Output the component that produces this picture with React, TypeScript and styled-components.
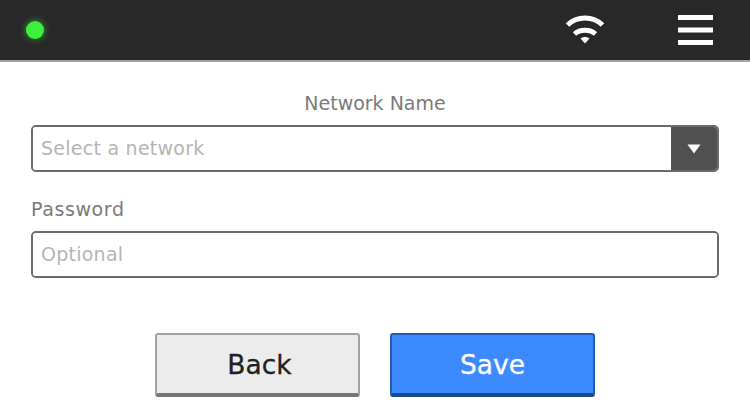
import styled, { createGlobalStyle } from 'styled-components';

const GlobalStyle = createGlobalStyle`
  html, body {
    margin: 0;
    padding: 0;
    background: #fff;
    font-family: "DejaVu Sans", sans-serif;
  }
`;

const Page = styled.div`
  width: 750px;
  height: 411px;
  overflow: hidden;
  display: flex;
  flex-direction: column;
`;

const Header = styled.header`
  height: 60px;
  flex: none;
  background: #282828;
  border-bottom: 2px solid #a0a0a0;
  display: flex;
  align-items: center;
  padding: 0 37px 0 26px;
`;

const StatusDot = styled.span`
  width: 18px;
  height: 18px;
  border-radius: 50%;
  background: #3cf03c;
  box-shadow: 0 0 6px 1px rgba(60, 240, 60, 0.45);
`;

const HeaderIcons = styled.div`
  margin-left: auto;
  display: flex;
  align-items: center;
  gap: 73px;
`;

const Form = styled.form`
  display: flex;
  flex-direction: column;
  padding: 30px 31px 0;
`;

const Label = styled.label<{ $center?: boolean; $tracking?: number }>`
  font-size: 19px;
  line-height: 23px;
  color: #7a7a7a;
  letter-spacing: ${(p) => p.$tracking ?? 0}px;
  text-align: ${(p) => (p.$center ? 'center' : 'left')};
  margin-bottom: 10px;
`;

const FieldBox = styled.div`
  height: 47px;
  box-sizing: border-box;
  border: 2px solid #6b6b6b;
  border-radius: 5px;
  display: flex;
  align-items: stretch;
  overflow: hidden;
  margin-bottom: 26px;
  background: #fff;
`;

const Input = styled.input`
  flex: 1;
  min-width: 0;
  border: 0;
  outline: 0;
  padding: 0 8px 2px;
  font: 19px "DejaVu Sans", sans-serif;
  letter-spacing: 0.25px;
  color: #333;

  &::placeholder {
    color: #b5b5b5;
    opacity: 1;
  }
`;

const Caret = styled.span`
  width: 46px;
  background: #505050;
  display: flex;
  align-items: center;
  justify-content: center;
`;

const Buttons = styled.div`
  display: flex;
  justify-content: center;
  gap: 30px;
  margin-top: 29px;
`;

const Button = styled.button<{ $primary?: boolean }>`
  width: 205px;
  height: 64px;
  box-sizing: border-box;
  border-radius: 3px;
  border: 2px solid ${(p) => (p.$primary ? '#1f5bb0' : '#a3a3a3')};
  border-bottom: 4px solid ${(p) => (p.$primary ? '#1c4a88' : '#777')};
  background: ${(p) => (p.$primary ? '#3d8aff' : '#ececec')};
  color: ${(p) => (p.$primary ? '#fff' : '#222')};
  font: 26.5px "DejaVu Sans", sans-serif;
  -webkit-text-stroke: 0.3px currentColor;
  padding: 0 0 0 ${(p) => (p.$primary ? 0 : 4)}px;
`;

export default function App() {
  return (
    <Page>
      <GlobalStyle />
      <Header>
        <StatusDot />
        <HeaderIcons>
          <svg width="40" height="30" viewBox="0 0 40 30" fill="none" stroke="#fff" strokeWidth="5">
            <path d="M2.5 10C12 .5 28 .5 37.5 10" />
            <path d="M9.5 19C15 14 25 14 30.5 19" />
            <path d="M20 28.5L15.5 23.5C18 21.5 22 21.5 24.5 23.5Z" fill="#fff" stroke="none" />
          </svg>
          <svg width="35" height="30" viewBox="0 0 35 30" fill="#fff">
            <rect x="0" y="0" width="35" height="5" />
            <rect x="0" y="12.5" width="35" height="5" />
            <rect x="0" y="25" width="35" height="5" />
          </svg>
        </HeaderIcons>
      </Header>
      <Form>
        <Label $center>Network Name</Label>
        <FieldBox>
          <Input placeholder="Select a network" readOnly />
          <Caret>
            <svg width="14" height="10" viewBox="0 0 14 10" fill="#fff">
              <path d="M0.5 0.5H13.5L7 9.5Z" />
            </svg>
          </Caret>
        </FieldBox>
        <Label $tracking={0.6}>Password</Label>
        <FieldBox>
          <Input placeholder="Optional" />
        </FieldBox>
        <Buttons>
          <Button type="button">Back</Button>
          <Button type="button" $primary>
            Save
          </Button>
        </Buttons>
      </Form>
    </Page>
  );
}
